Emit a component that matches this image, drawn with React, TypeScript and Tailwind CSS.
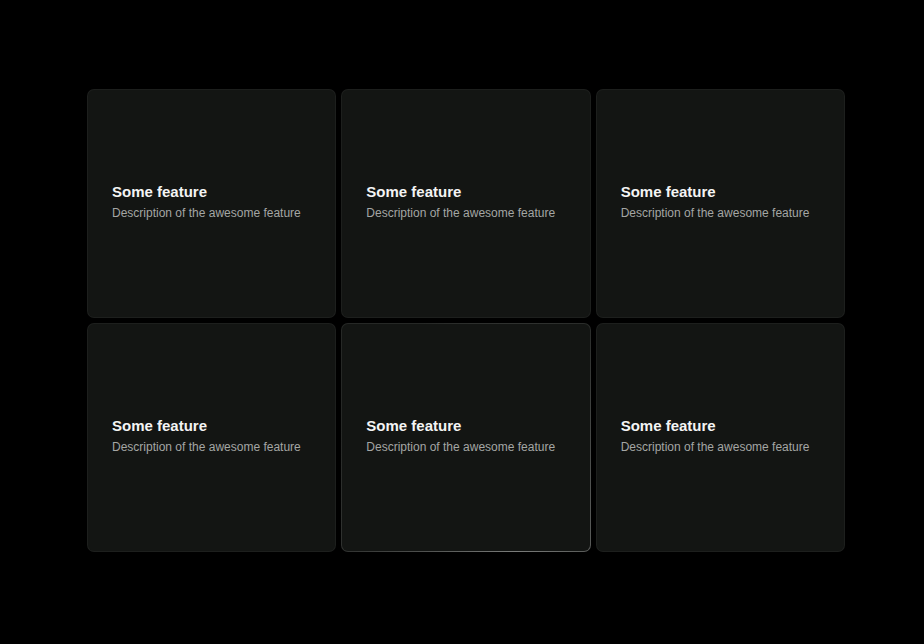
const features = Array.from({ length: 6 }, (_, i) => ({
  id: i,
  title: "Some feature",
  description: "Description of the awesome feature",
  glow: i === 4,
}));

function FeatureCard({ title, description, glow }: { title: string; description: string; glow: boolean }) {
  return (
    <div
      className={
        glow
          ? "rounded-[7px] p-px bg-[radial-gradient(ellipse_at_70%_100%,#7a7c7a_0%,#4c4e4c_40%,#262826_80%)]"
          : "rounded-[7px] p-px bg-[#1d1f1d]"
      }
    >
      <div className="flex h-full flex-col justify-center rounded-[6px] bg-[#131513] px-[24px] pb-[3px]">
        <h3 className="text-[15px] font-bold leading-[18px] text-[#f4f4f4]">{title}</h3>
        <p className="mt-[4px] text-[12px] leading-[16px] text-[#a4a6a4]">{description}</p>
      </div>
    </div>
  );
}

export default function App() {
  return (
    <div className="min-h-screen w-full bg-black pt-[89px] font-['Liberation_Sans',Arial,sans-serif]">
      <div className="ml-[87px] grid w-[758px] grid-cols-3 grid-rows-[229px_229px] gap-[5px]">
        {features.map((f) => (
          <FeatureCard key={f.id} title={f.title} description={f.description} glow={f.glow} />
        ))}
      </div>
    </div>
  );
}
